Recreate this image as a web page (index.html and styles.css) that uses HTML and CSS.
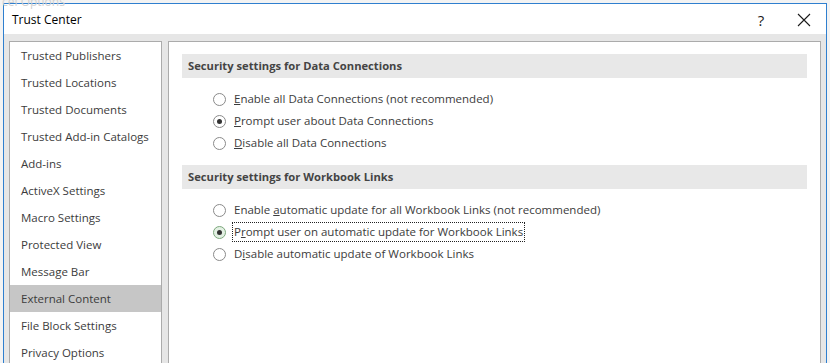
FILE: index.html
```html
<!DOCTYPE html>
<html lang="en">
<head>
    <meta charset="UTF-8">
    <title>Trust Center</title>
    <link rel="stylesheet" href="styles.css">
</head>
<body>

<div class="behind">cel Options</div>

<div class="dialog">
    <div class="title_bar">
        <div class="title_text">Trust Center</div>
        <div class="help_btn">?</div>
        <div class="close_btn">
            <svg width="14" height="14" viewBox="0 0 14 14">
                <path d="M1 1 L13 13 M13 1 L1 13" stroke="#1a1a1a" stroke-width="1.1" fill="none"/>
            </svg>
        </div>
    </div>

    <div class="dialog_body">
        <div class="nav_list">
            <div class="nav_item">Trusted Publishers</div>
            <div class="nav_item">Trusted Locations</div>
            <div class="nav_item">Trusted Documents</div>
            <div class="nav_item">Trusted Add-in Catalogs</div>
            <div class="nav_item">Add-ins</div>
            <div class="nav_item">ActiveX Settings</div>
            <div class="nav_item">Macro Settings</div>
            <div class="nav_item">Protected View</div>
            <div class="nav_item">Message Bar</div>
            <div class="nav_item nav_selected">External Content</div>
            <div class="nav_item">File Block Settings</div>
            <div class="nav_item">Privacy Options</div>
        </div>

        <div class="content_panel">
            <div class="section_head">Security settings for Data Connections</div>
            <div class="radio_group">
                <div class="radio_row">
                    <span class="radio"></span>
                    <span class="radio_label"><u>E</u>nable all Data Connections (not recommended)</span>
                </div>
                <div class="radio_row">
                    <span class="radio radio_on"></span>
                    <span class="radio_label"><u>P</u>rompt user about Data Connections</span>
                </div>
                <div class="radio_row">
                    <span class="radio"></span>
                    <span class="radio_label"><u>D</u>isable all Data Connections</span>
                </div>
            </div>

            <div class="section_head">Security settings for Workbook Links</div>
            <div class="radio_group">
                <div class="radio_row">
                    <span class="radio"></span>
                    <span class="radio_label">Enable <u>a</u>utomatic update for all Workbook Links (not recommended)</span>
                </div>
                <div class="radio_row">
                    <span class="radio radio_on radio_focus"></span>
                    <span class="radio_label focus_box">P<u>r</u>ompt user on automatic update for Workbook Links</span>
                </div>
                <div class="radio_row">
                    <span class="radio"></span>
                    <span class="radio_label">D<u>i</u>sable automatic update of Workbook Links</span>
                </div>
            </div>
        </div>
    </div>
</div>

</body>
</html>
```

FILE: styles.css
```css
html, body {
    margin: 0;
    padding: 0;
    height: 100%;
    overflow: hidden;
}

body {
    background-color: #f3f3f3;
    font-family: "Open Sans", "Noto Sans", sans-serif;
    font-size: 11.5px;
    color: #3c3c3c;
    position: relative;
    padding-top: 3px;
    box-sizing: border-box;
}

.behind {
    position: absolute;
    left: 2px;
    top: -7px;
    color: #d0d0d0;
    font-size: 12px;
}

.dialog {
    margin: 0 3px;
    height: 360px;
    border: 1px solid #2f7fcf;
    border-bottom: none;
    background-color: #e6e6e6;
    display: flex;
    flex-direction: column;
    overflow: hidden;
}

.title_bar {
    flex-shrink: 0;
    height: 30px;
    background-color: #ffffff;
    display: flex;
    align-items: center;
}

.title_text {
    flex: 1;
    padding-left: 8px;
    padding-top: 1px;
    font-size: 12px;
    color: #000000;
}

.help_btn {
    width: 20px;
    text-align: center;
    font-size: 15px;
    color: #1a1a1a;
    margin-right: 26px;
    padding-top: 1px;
}

.close_btn {
    width: 14px;
    height: 14px;
    margin-right: 15px;
    margin-top: 2px;
    display: flex;
}

.dialog_body {
    flex-shrink: 0;
    display: flex;
    gap: 6px;
    padding: 7px 5px 0 5px;
}

.nav_list {
    width: 151px;
    background-color: #ffffff;
    border: 1px solid #ababab;
    border-bottom: none;
}

.nav_item {
    box-sizing: border-box;
    height: 27px;
    padding-top: 4px;
    line-height: 20px;
    padding-left: 11px;
    white-space: nowrap;
}

.nav_selected {
    background-color: #c6c6c6;
}

.content_panel {
    flex: 1;
    background-color: #ffffff;
    border: 1px solid #ababab;
    border-bottom: none;
    padding: 12px 13px 0 13px;
}

.section_head {
    box-sizing: border-box;
    height: 24px;
    padding-top: 2px;
    line-height: 20px;
    padding-left: 6px;
    background-color: #e8e8e8;
    font-weight: bold;
    font-size: 11.2px;
    color: #444444;
}

.radio_group {
    padding: 10px 0 11px 31px;
}

.radio_row {
    height: 22px;
    display: flex;
    align-items: center;
}

.radio {
    width: 11px;
    height: 11px;
    border: 1px solid #8a8a8a;
    border-radius: 50%;
    background-color: #ffffff;
    margin-right: 7px;
    position: relative;
}

.radio_on::after {
    content: "";
    position: absolute;
    left: 3px;
    top: 3px;
    width: 5px;
    height: 5px;
    border-radius: 50%;
    background-color: #333333;
}

.radio_focus {
    border-color: #7da87d;
    background-color: #e3f0e3;
}

.radio_label {
    white-space: nowrap;
    padding: 1px 1px;
    line-height: 16px;
}

.focus_box {
    outline: 1px dotted #222222;
}
```
